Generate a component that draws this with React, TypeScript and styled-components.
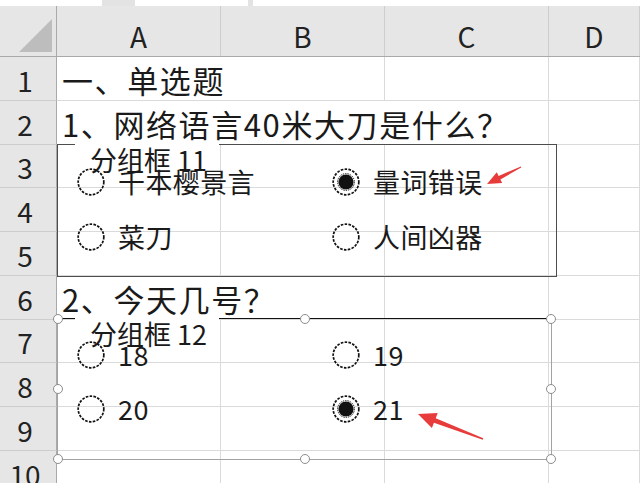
import React from 'react'
import styled, { createGlobalStyle } from 'styled-components'

const GlobalStyle = createGlobalStyle`
    html, body {
        margin: 0;
        padding: 0;
        background: #fff;
    }
    body {
        font-family: 'Noto Sans CJK SC', 'Noto Sans', sans-serif;
        color: #1a1a1a;
    }
`

const COLS = '57px 164px 164px 164px 1fr'
const ROW_H = 43.75

const Sheet = styled.div`
    position: relative;
    width: 640px;
    height: 483px;
    overflow: hidden;
    background: #fff;
`

const TabStrip = styled.div`
    display: flex;
    height: 6px;
    background: #e3e3e3;
`

const Tab = styled.div<{ $w: number; $mr: number }>`
    width: ${(p) => p.$w}px;
    margin-right: ${(p) => p.$mr}px;
    background: #fff;
    flex-shrink: 0;
`

const HeaderRow = styled.div`
    display: grid;
    grid-template-columns: ${COLS};
    height: 51px;
    background: #e6e6e6;
    border-bottom: 1px solid #a9a9a9;
    box-sizing: border-box;
`

const Corner = styled.div`
    display: flex;
    align-items: flex-end;
    justify-content: flex-end;
    padding: 0 4px 4px 0;
    border-right: 1px solid #a9a9a9;
`

const CornerTriangle = styled.div`
    width: 33px;
    height: 33px;
    background: #bdbdbd;
    clip-path: polygon(100% 0, 100% 100%, 0 100%);
`

const ColHead = styled.div`
    display: flex;
    align-items: flex-end;
    justify-content: center;
    padding-bottom: 3px;
    border-right: 1px solid #cdcdcd;
    font-size: 28px;
    line-height: 34px;
    color: #222;
`

const Row = styled.div`
    display: grid;
    grid-template-columns: ${COLS};
    height: ${ROW_H}px;
`

const RowHead = styled.div`
    display: flex;
    align-items: flex-end;
    justify-content: center;
    padding: 0 6px 1px 0;
    background: #e6e6e6;
    border-right: 1px solid #a9a9a9;
    border-bottom: 1px solid #cdcdcd;
    font-size: 28px;
    line-height: 38px;
    color: #222;
`

const Cell = styled.div<{ $span?: number }>`
    grid-column: span ${(p) => p.$span ?? 1};
    display: flex;
    align-items: flex-end;
    padding: 0 0 0 5px;
    border-right: 1px solid #dadada;
    border-bottom: 1px solid #dadada;
    font-size: 31px;
    letter-spacing: 1.6px;
    line-height: 40px;
    white-space: nowrap;
    color: #1a1a1a;
`

const GroupBox = styled.div<{
    $top: number
    $left: number
    $w: number
    $h: number
    $selected?: boolean
}>`
    position: absolute;
    top: ${(p) => p.$top}px;
    left: ${(p) => p.$left}px;
    width: ${(p) => p.$w}px;
    height: ${(p) => p.$h}px;
    box-sizing: border-box;
    border: 1px solid ${(p) => (p.$selected ? '#a3a3a3' : '#4d4d4d')};
    border-top-color: ${(p) => (p.$selected ? '#111' : '#4d4d4d')};
`

const GroupLabel = styled.div`
    position: absolute;
    top: -2px;
    left: 17px;
    padding: 0 12px 0 15px;
    background: #fff;
    font-size: 27px;
    line-height: 34px;
    white-space: nowrap;
    color: #1a1a1a;
`

const Options = styled.div<{ $pad: number; $gap: number }>`
    position: relative;
    display: grid;
    grid-template-columns: 255px 1fr;
    row-gap: ${(p) => p.$gap}px;
    padding: ${(p) => p.$pad}px 0 0 19px;
`

const Option = styled.label`
    display: flex;
    align-items: center;
    gap: 13px;
    height: 28px;
    font-size: 27px;
    letter-spacing: 0.4px;
    line-height: 28px;
    white-space: nowrap;
    color: #1a1a1a;
`

const Handle = styled.span<{ $x: string; $y: string }>`
    position: absolute;
    left: ${(p) => p.$x};
    top: ${(p) => p.$y};
    width: 8px;
    height: 8px;
    margin: -5px 0 0 -5px;
    border: 1px solid #8c8c8c;
    border-radius: 50%;
    background: #fff;
`

const ArrowLayer = styled.svg`
    position: absolute;
    inset: 0;
    width: 640px;
    height: 483px;
    pointer-events: none;
`

const Radio: React.FC<{ checked?: boolean }> = ({ checked }) => (
    <svg width="28" height="28" viewBox="0 0 28 28">
        <circle
            cx="14"
            cy="14"
            r="12.8"
            fill="none"
            stroke="#111"
            strokeWidth="1.7"
            strokeDasharray="2.6 1.3"
        />
        {checked && (
            <>
                <circle cx="14" cy="14" r="7.6" fill="#111" />
                <circle
                    cx="14"
                    cy="14"
                    r="8.4"
                    fill="none"
                    stroke="#111"
                    strokeWidth="1"
                    strokeDasharray="1.4 1"
                />
            </>
        )}
    </svg>
)

const columns = ['A', 'B', 'C', 'D']

const rows: { n: number; text?: string; span?: number }[] = [
    { n: 1, text: '一、单选题', span: 2 },
    { n: 2, text: '1、网络语言40米大刀是什么？', span: 3 },
    { n: 3 },
    { n: 4 },
    { n: 5 },
    { n: 6, text: '2、今天几号？', span: 2 },
    { n: 7 },
    { n: 8 },
    { n: 9 },
    { n: 10 },
]

const handles: [string, string][] = [
    ['0%', '0%'],
    ['50%', '0%'],
    ['100%', '0%'],
    ['0%', '50%'],
    ['100%', '50%'],
    ['0%', '100%'],
    ['50%', '100%'],
    ['100%', '100%'],
]

const App: React.FC = () => {
    return (
        <Sheet>
            <GlobalStyle />
            <TabStrip>
                <Tab $w={102} $mr={33} />
                <Tab $w={113} $mr={5} />
                <Tab $w={387} $mr={0} />
            </TabStrip>
            <HeaderRow>
                <Corner>
                    <CornerTriangle />
                </Corner>
                {columns.map((c) => (
                    <ColHead key={c}>{c}</ColHead>
                ))}
            </HeaderRow>
            {rows.map((r) => {
                const used = r.span ?? (r.text ? 1 : 0)
                const empty = 4 - used
                return (
                    <Row key={r.n}>
                        <RowHead>{r.n}</RowHead>
                        {r.text && <Cell $span={r.span}>{r.text}</Cell>}
                        {Array.from({ length: empty }).map((_, i) => (
                            <Cell key={i} />
                        ))}
                    </Row>
                )
            })}

            <GroupBox $top={144} $left={57} $w={500} $h={133}>
                <GroupLabel>分组框 11</GroupLabel>
                <Options $pad={23} $gap={27}>
                    <Option>
                        <Radio />
                        千本樱景言
                    </Option>
                    <Option>
                        <Radio checked />
                        量词错误
                    </Option>
                    <Option>
                        <Radio />
                        菜刀
                    </Option>
                    <Option>
                        <Radio />
                        人间凶器
                    </Option>
                </Options>
            </GroupBox>

            <GroupBox $top={318} $left={57} $w={495} $h={142} $selected>
                <GroupLabel>分组框 12</GroupLabel>
                <Options $pad={22} $gap={26}>
                    <Option>
                        <Radio />
                        18
                    </Option>
                    <Option>
                        <Radio />
                        19
                    </Option>
                    <Option>
                        <Radio />
                        20
                    </Option>
                    <Option>
                        <Radio checked />
                        21
                    </Option>
                </Options>
                {handles.map(([x, y]) => (
                    <Handle key={x + y} $x={x} $y={y} />
                ))}
            </GroupBox>

            <ArrowLayer viewBox="0 0 640 483">
                <polygon
                    fill="#e83b3b"
                    points="521.2,167.4 500.4,179.5 502.2,183.1 487,184 496.8,172.3 498.6,175.9 520.8,166.6"
                />
                <polygon
                    fill="#e83b3b"
                    points="483.25,438.35 435.7,418.2 437.7,413 418,414 431.9,428 433.9,422.8 482.75,439.65"
                />
            </ArrowLayer>
        </Sheet>
    )
}

export default App
